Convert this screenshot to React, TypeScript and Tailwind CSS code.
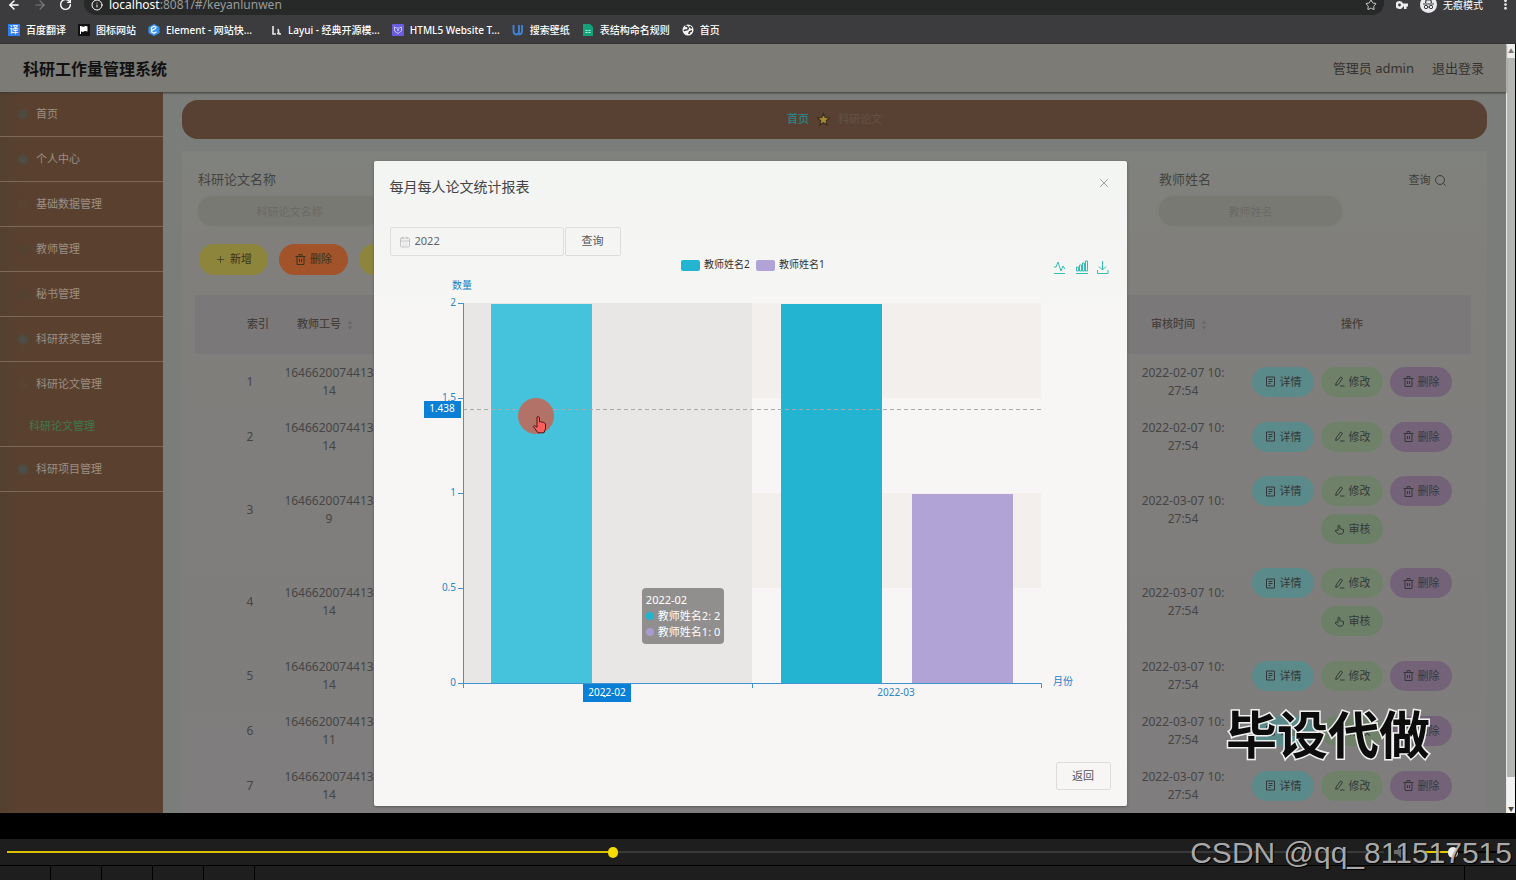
import { useState } from 'react';
import type { ReactNode } from 'react';
import { ArrowLeft, ArrowRight, RotateCw, Info, Star, EllipsisVertical, Plus, X, CalendarDays } from 'lucide-react';

interface Bookmark {
  label: string;
  icon: ReactNode;
}

const bookmarks: Bookmark[] = [
  {
    label: '百度翻译',
    icon: <span className="w-3 h-3 bg-[#2f7df0] text-white text-[9px] leading-3 text-center">译</span>,
  },
  {
    label: '图标网站',
    icon: (
      <svg className="w-3 h-3" viewBox="0 0 12 12">
        <rect width="12" height="12" rx="1" fill="#111" />
        <path d="M2.500 2v8" stroke="#fff" />
        <path d="M2 2.500c2-1 3 1 4.500 0s2 0 3 0v5c-1.500 0-2-1-3.500 0s-2 0-4 0z" fill="#fff" />
      </svg>
    ),
  },
  {
    label: 'Element - 网站快...',
    icon: (
      <svg className="w-3 h-3" viewBox="0 0 12 12">
        <path d="M6 0l5.500 3v6L6 12 .5 9V3z" fill="#3b94f5" />
        <path d="M8.500 3.500L6 2.300 3.500 3.800v4L6 9.300l2.500-1.500M4 6.500l4-2.200" stroke="#fff" strokeWidth="1.200" fill="none" />
      </svg>
    ),
  },
  {
    label: 'Layui - 经典开源模...',
    icon: (
      <svg className="w-3 h-3 ml-[6px]" viewBox="0 0 12 12">
        <path d="M3 2v8h3M8 5l1 5h2M7 9.500h1" stroke="#e8e8e8" strokeWidth="1.600" fill="none" />
      </svg>
    ),
  },
  {
    label: 'HTML5 Website T...',
    icon: (
      <svg className="w-3 h-3" viewBox="0 0 12 12">
        <rect width="12" height="12" rx="1" fill="#6a5de0" />
        <path d="M2.500 3l2 1h3l2-1v4L6 9.500 2.500 7z" fill="none" stroke="#c9c4ff" />
        <circle cx="6" cy="6" r="1" fill="#c9c4ff" />
      </svg>
    ),
  },
  {
    label: '搜索壁纸',
    icon: (
      <svg className="w-3 h-3" viewBox="0 0 12 12">
        <path d="M1.500 1v6c0 2 1 3.500 3 3.500S7 9 7 7V1M10 1v6c0 2-1 3.500-3 3.500" stroke="#3d86e0" strokeWidth="1.800" fill="none" />
      </svg>
    ),
  },
  {
    label: '表结构命名规则',
    icon: (
      <svg className="w-3 h-3" viewBox="0 0 12 12">
        <path d="M1 0h7l3 3v9H1z" fill="#12a37a" />
        <path d="M3.500 6.500h2m1 0h2m-5 2h2m1 0h2" stroke="#bff0de" />
      </svg>
    ),
  },
  {
    label: '首页',
    icon: (
      <svg className="w-3 h-3" viewBox="0 0 12 12">
        <circle cx="6" cy="6" r="5.500" fill="#f2f2f2" />
        <path d="M3 2c2 0 4 1 3 3S3 5 2 7m5 3c0-2 1-3 3-3M8 2c0 1 1 2 2 2" stroke="#3c3c3e" strokeWidth="1.600" fill="none" />
      </svg>
    ),
  },
];

interface MenuItem {
  label: string;
  dot: string;
  child?: string;
}

const menu: MenuItem[] = [
  { label: '首页', dot: 'bg-[#4f4b42]' },
  { label: '个人中心', dot: 'bg-[#4e4d46]' },
  { label: '基础数据管理', dot: 'bg-[#5a4331]' },
  { label: '教师管理', dot: 'bg-[#544232]' },
  { label: '秘书管理', dot: 'bg-[#544232]' },
  { label: '科研获奖管理', dot: 'bg-[#4e4d46]' },
  { label: '科研论文管理', dot: 'bg-[#5a4331]', child: '科研论文管理' },
  { label: '科研项目管理', dot: 'bg-[#49504a]' },
];

interface Row {
  id: number;
  code: [string, string];
  time: [string, string];
  review?: boolean;
}

const rows: Row[] = [
  { id: 1, code: ['1646620074413', '14'], time: ['2022-02-07 10:', '27:54'] },
  { id: 2, code: ['1646620074413', '14'], time: ['2022-02-07 10:', '27:54'] },
  { id: 3, code: ['1646620074413', '9'], time: ['2022-03-07 10:', '27:54'], review: true },
  { id: 4, code: ['1646620074413', '14'], time: ['2022-03-07 10:', '27:54'], review: true },
  { id: 5, code: ['1646620074413', '14'], time: ['2022-03-07 10:', '27:54'] },
  { id: 6, code: ['1646620074413', '11'], time: ['2022-03-07 10:', '27:54'] },
  { id: 7, code: ['1646620074413', '14'], time: ['2022-03-07 10:', '27:54'] },
];

function BrowserChrome() {
  return (
    <div className="shrink-0 h-11 bg-[#3c3c3e] text-white border-b border-[#33332f] overflow-hidden">
      <div className="flex h-[15px]">
        <div className="flex items-center gap-3 h-[9px] pl-[7px] pr-3 shrink-0">
          <button aria-label="Back"><ArrowLeft size={14} strokeWidth={2.5} /></button>
          <button aria-label="Forward" className="text-[#7d7d7f]"><ArrowRight size={14} /></button>
          <button aria-label="Reload"><RotateCw size={13} strokeWidth={2.5} /></button>
        </div>
        <div className="flex-1 bg-[#272928] rounded-b-xl px-[7px]">
          <div className="flex items-center gap-[6px] h-[9px]">
            <Info size={12} />
            <span className="text-[12px] leading-4">
              localhost<span className="text-[#9a9b9b]">:8081/#/keyanlunwen</span>
            </span>
            <button aria-label="Bookmark" className="ml-auto"><Star size={12} strokeWidth={1.5} /></button>
          </div>
        </div>
        <div className="flex items-center h-[9px] pl-3 pr-1 shrink-0">
          <svg className="w-3 h-2 mr-3" viewBox="0 0 12 8">
            <path d="M3.500 0a4 4 0 0 1 3.700 2.500H12v3h-1.500V8H8V5.500h-.8A4 4 0 1 1 3.500 0z" fill="#eee" />
            <circle cx="3.500" cy="4" r="1.400" fill="#3c3c3e" />
          </svg>
          <svg className="w-[17px] h-[17px]" viewBox="0 0 17 17">
            <circle cx="8.500" cy="8.500" r="8.500" fill="#e8eaed" />
            <path d="M5.500 7l.8-3.500 2.200.5 2.200-.5.8 3.500M3 8h11" fill="none" stroke="#3c3c3e" strokeWidth="1.200" />
            <circle cx="6" cy="11" r="1.700" fill="none" stroke="#3c3c3e" />
            <circle cx="11" cy="11" r="1.700" fill="none" stroke="#3c3c3e" />
            <path d="M7.700 11h1.600" stroke="#3c3c3e" />
          </svg>
          <span className="text-[10px] leading-4 ml-[6px] mr-4">无痕模式</span>
          <EllipsisVertical size={13} strokeWidth={3} />
        </div>
      </div>
      <div className="flex items-center gap-3 h-[30px] pl-2">
        {bookmarks.map(b => (
          <a key={b.label} href="#" className="flex items-center gap-[6px] text-[10px] font-medium whitespace-nowrap">
            {b.icon}
            {b.label}
          </a>
        ))}
      </div>
    </div>
  );
}

function Sidebar() {
  return (
    <nav className="w-[163px] shrink-0 text-[11px] text-[#9c8f83] bg-linear-to-r from-[#54402f] to-[#5a412f] to-15%">
      {menu.map(item => (
        <div key={item.label} className="border-b border-[#7e6853]">
          <a href="#" className="flex items-center gap-2 h-11 pl-[18px]">
            <span className={`w-[10px] h-[9px] rounded-full blur-[1px] ${item.dot}`} />
            {item.label}
          </a>
          {item.child && (
            <a href="#" className="flex items-center h-10 pl-[29px] text-[#3d7a4c]">{item.child}</a>
          )}
        </div>
      ))}
    </nav>
  );
}

function SearchField({ id, label }: { id: string; label: string }) {
  return (
    <div className="w-[183px]">
      <label htmlFor={id} className="block text-[13px] leading-5 text-[#44443f]">{label}</label>
      <input
        id={id}
        placeholder={label}
        className="block mt-[7px] w-full h-[30px] rounded-full bg-[#797973] text-center text-[11px] placeholder:text-[#696964] shadow-[0_0_2px_#787872]"
      />
    </div>
  );
}

function DetailIcon() {
  return (
    <svg className="w-[11px] h-[11px]" viewBox="0 0 11 11" fill="none" stroke="currentColor">
      <path d="M1.500 1h8v9h-8zM3.500 3.500h4M3.500 5.500h4M3.500 7.500h2" />
    </svg>
  );
}

function EditIcon() {
  return (
    <svg className="w-[11px] h-[11px]" viewBox="0 0 11 11" fill="none" stroke="currentColor">
      <path d="M6.500 1l2 1.300-4.300 6.200-2.500 1 .4-2.500zM6 10h4.500" />
    </svg>
  );
}

function TrashIcon() {
  return (
    <svg className="w-[11px] h-[11px]" viewBox="0 0 11 11" fill="none" stroke="currentColor">
      <path d="M.5 2.500h10M2 2.500v8h7v-8M4 2.500v-2h3v2M4.500 5v3M6.500 5v3" />
    </svg>
  );
}

function ThumbIcon() {
  return (
    <svg className="w-[11px] h-[11px]" viewBox="0 0 11 11" fill="none" stroke="currentColor">
      <path d="M4 6.500V1.700a1 1 0 0 1 1.800 0v3l3.700.8v2.800L8 10H4.500L1 6.800l1-.8z" />
    </svg>
  );
}

function RowButton({ color, icon, children }: { color: string; icon: ReactNode; children: ReactNode }) {
  return (
    <button className={`flex items-center justify-center gap-1 w-[62px] h-[30px] rounded-full text-[11px] text-[#34383a] ${color}`}>
      {icon}
      {children}
    </button>
  );
}

function SortMark() {
  return (
    <svg className="w-[6px] h-[10px] ml-[6px] inline-block" viewBox="0 0 6 10">
      <path d="M3 0l2.500 4h-5zM3 10l2.500-4h-5z" fill="#6c6a6a" />
    </svg>
  );
}

function PaperTable() {
  return (
    <table className="w-full table-fixed border-collapse text-center text-[#454545]">
      <colgroup>
        <col className="w-[30px]" />
        <col className="w-[50px]" />
        <col className="w-[108px]" />
        <col />
        <col className="w-[100px]" />
        <col className="w-[238px]" />
      </colgroup>
      <thead>
        <tr className="h-[59px] bg-[#7b7879] text-[11px] text-[#45403a]">
          <th />
          <th className="font-medium pl-4">索引</th>
          <th className="font-medium pr-2">教师工号<SortMark /></th>
          <th />
          <th className="font-medium pr-2">审核时间<SortMark /></th>
          <th className="font-medium">操作</th>
        </tr>
      </thead>
      <tbody className="text-[12px] leading-[18px]">
        {rows.map(row => (
          <tr key={row.id} className={row.review ? 'h-[92px]' : 'h-[55px]'}>
            <td />
            <td>{row.id}</td>
            <td>{row.code[0]}<br />{row.code[1]}</td>
            <td />
            <td>{row.time[0]}<br />{row.time[1]}</td>
            <td>
              <div className="flex flex-wrap justify-center gap-x-[7px] gap-y-2">
                <RowButton color="bg-[#5b8a8a]" icon={<DetailIcon />}>详情</RowButton>
                <RowButton color="bg-[#6f8269]" icon={<EditIcon />}>修改</RowButton>
                <RowButton color="bg-[#746378]" icon={<TrashIcon />}>删除</RowButton>
                {row.review && (
                  <RowButton color="bg-[#6b8066]" icon={<ThumbIcon />}>审核</RowButton>
                )}
              </div>
            </td>
          </tr>
        ))}
      </tbody>
    </table>
  );
}

function Content() {
  return (
    <main className="flex-1 min-w-0 px-[19px] pt-2 bg-[#7a7d79]">
      <div className="flex items-center justify-center gap-2 h-[39px] pt-px rounded-2xl bg-[#584132] border-b border-[#57422b] text-[11px]">
        <a href="#" className="font-medium text-[#2b8388]">首页</a>
        <svg className="w-[13px] h-[13px]" viewBox="0 0 24 24">
          <path d="M12 1.500l3.200 7 7.600.8-5.700 5.100 1.600 7.500L12 18l-6.700 3.900 1.600-7.500L1.200 9.300l7.600-.8z" fill="#a48a36" stroke="#3a2c17" strokeWidth="2" />
        </svg>
        <span className="text-[#665246]">科研论文</span>
      </div>
      <div className="mt-3 pt-[18px] pl-[13px] pr-4 bg-linear-to-b from-[#80827e] via-[#807f7c] via-15% to-[#7f7d7d]">
        <div className="flex items-start pl-[3px]">
          <SearchField id="paper" label="科研论文名称" />
          <div className="ml-auto">
            <SearchField id="teacher" label="教师姓名" />
          </div>
          <button className="flex items-center justify-center gap-1 ml-[50px] mr-[9px] w-[70px] h-[22px] text-[11px] text-[#3d3d39]">
            查询
            <svg className="w-[11px] h-[11px]" viewBox="0 0 11 11" fill="none" stroke="currentColor">
              <circle cx="5" cy="5" r="4.500" />
              <path d="M8.500 8.500l2 2" />
            </svg>
          </button>
        </div>
        <div className="flex gap-[11px] mt-[18px] pl-1 text-[11px] text-[#37331c]">
          <button className="flex items-center justify-center gap-1 w-[69px] h-[31px] rounded-full bg-[#8d853b]">
            <Plus size={11} strokeWidth={1.5} />新增
          </button>
          <button className="flex items-center justify-center gap-1 w-[69px] h-[31px] rounded-full bg-[#a2532a]">
            <TrashIcon />删除
          </button>
          <button className="px-4 h-[31px] rounded-full bg-[#8d853b]">每月每人论文统计报表</button>
        </div>
        <div className="mt-5">
          <PaperTable />
        </div>
      </div>
    </main>
  );
}

const plot = { left: 73, right: 651, top: 47, bottom: 427 };
const yTicks = [0, 0.5, 1, 1.5, 2];
const toY = (v: number) => plot.bottom - (v / 2) * (plot.bottom - plot.top);

const bars = [
  { x: 101, value: 2, color: '#46c3dc' },
  { x: 391, value: 2, color: '#22b4d1' },
  { x: 522, value: 1, color: '#b2a3d6' },
];

function PaperChart() {
  return (
    <div className="relative">
      <svg className="block w-full" viewBox="0 0 721 490" fontSize="10" fill="none">
        <rect x="291" y="4" width="19" height="11" rx="2" fill="#22b4d1" />
        <text x="314" y="12" fill="#333">教师姓名2</text>
        <rect x="366" y="4" width="19" height="11" rx="2" fill="#b2a3d6" />
        <text x="389" y="12" fill="#333">教师姓名1</text>

        {/* toolbox */}
        <g stroke="#35bdb5">
          <path d="M664 11h2l2-5 3 9 2-5 2 3M664 17.500h11" />
          <path d="M686.500 15v-4h2v4zM689.500 15v-6h2v6zM692.500 15V7h2v8zM695.500 15V5h2v10zM686 17.500h12" />
          <path d="M712.500 5v9M709 10.500l3.500 3.500 3.500-3.500M707.500 14v3.500h10.500v-3.500" />
        </g>

        <rect x={plot.left} y={toY(2)} width="578" height="95" fill="#f2efed" />
        <rect x={plot.left} y={toY(1)} width="578" height="95" fill="#f2efed" />
        <rect x={plot.left} y={plot.top} width="289" height="380" fill="#e9e7e6" />

        {bars.map(b => (
          <rect key={b.x} x={b.x} y={toY(b.value) + 1} width="101" height={plot.bottom - toY(b.value) - 1} fill={b.color} />
        ))}

        <path d="M73 153.500H651" stroke="#aaa" strokeDasharray="4 3" />
        <path d="M73.500 47V432M68 427.500H651.500V432M362.500 427V432" stroke="#3f93cf" />
        {yTicks.map(t => (
          <g key={t}>
            <path d={`M68 ${toY(t) + 0.5}H73`} stroke="#3f93cf" />
            <text x="66" y={toY(t) + 3} textAnchor="end" fill="#2b86c8">{t}</text>
          </g>
        ))}
        <text x="72" y="33" textAnchor="middle" fill="#1482c8">数量</text>
        <text x="663" y="429" fill="#1482c8">月份</text>
        <text x="506" y="440" textAnchor="middle" fill="#2b86c8">2022-03</text>

        <rect x="34" y="145" width="37" height="17" fill="#0a7fd6" />
        <text x="52" y="156" textAnchor="middle" fill="#fff">1.438</text>
        <rect x="193" y="428" width="48" height="18" fill="#0a7fd6" />
        <text x="217" y="440" textAnchor="middle" fill="#fff">2022-02</text>
        <path d="M212 439l3 2 2-2" stroke="#fff" />

        {/* click highlight and pointer */}
        <circle cx="146" cy="160" r="18" fill="#b27268" />
        <path
          d="M147 161c1-1 2.500 0 2.500 1v4l1-.5 1.500.8 1.500-.2 1 1.200 1 .5v5l-1.500 4h-6l-4.500-6c0-1.500 1.500-1.500 3.500.5z"
          fill="#fa5f5c"
          stroke="#4a1a1a"
        />
      </svg>
      <div className="absolute left-[35%] top-[332px] rounded bg-[#918f8e] px-1 py-1 text-[11px] leading-[16px] text-white whitespace-nowrap">
        <p>2022-02</p>
        <p className="flex items-center gap-1"><span className="w-2 h-2 rounded-full bg-[#22b4d1]" />教师姓名2: 2</p>
        <p className="flex items-center gap-1"><span className="w-2 h-2 rounded-full bg-[#a99bcf]" />教师姓名1: 0</p>
      </div>
    </div>
  );
}

function ReportDialog() {
  const [year, setYear] = useState('2022');

  return (
    <div role="dialog" aria-labelledby="report-title" className="w-1/2 mr-[6px] px-4 pb-4 rounded-xs bg-linear-to-b from-[#f3f5f3] via-[#f7f6f5] via-30% to-[#f8f5f5] shadow-[0_1px_3px_rgba(0,0,0,0.3)]">
      <div className="flex items-center justify-between h-[50px]">
        <h2 id="report-title" className="text-[14px] text-[#444]">每月每人论文统计报表</h2>
        <button aria-label="Close" className="text-[#909399] mb-[6px]"><X size={14} strokeWidth={1.5} /></button>
      </div>
      <form className="flex gap-px pt-4" onSubmit={e => e.preventDefault()}>
        <label className="flex items-center gap-1 w-[174px] h-[29px] px-2 border border-[#dfe0de] rounded-xs">
          <CalendarDays size={12} strokeWidth={1.5} className="text-[#b4b6b8] shrink-0" />
          <input
            aria-label="年份"
            value={year}
            onChange={e => setYear(e.target.value)}
            className="min-w-0 flex-1 text-[11px] text-[#606266] outline-none"
          />
        </label>
        <button className="w-14 h-[29px] border border-[#dcdddc] rounded-xs text-[11px] text-[#555]">查询</button>
      </form>
      <PaperChart />
      <div className="flex justify-end pt-4">
        <button className="w-[55px] h-7 border border-[#dcdcdc] rounded-xs text-[11px] text-[#555]">返回</button>
      </div>
    </div>
  );
}

function Player() {
  const [progress, setProgress] = useState(44);
  const [volume, setVolume] = useState(42);
  const track = (value: number, on: string, off: string) => ({
    background: `linear-gradient(to right, ${on} ${value}%, ${off} ${value}%)`,
  });

  return (
    <div className="shrink-0 bg-[#1e1e1e]">
      <div className="flex items-center h-[26px] pl-[7px] pr-[10px]">
        <input
          type="range"
          aria-label="Progress"
          value={progress}
          onChange={e => setProgress(Number(e.target.value))}
          style={track(progress, '#d8c200', '#3a3a3a')}
          className="flex-1 h-[2px] appearance-none [&::-webkit-slider-thumb]:appearance-none [&::-webkit-slider-thumb]:w-[10px] [&::-webkit-slider-thumb]:h-[11px] [&::-webkit-slider-thumb]:rounded-full [&::-webkit-slider-thumb]:bg-[#f5dc00]"
        />
        <button aria-label="Mute" className="ml-[10px] mr-2">
          <svg className="w-3 h-3" viewBox="0 0 12 12">
            <path d="M0 4h3l4-4v12L3 8H0z" fill="#6b6b6b" />
            <path d="M9 3v6M11 4v4" stroke="#4a4a4a" />
          </svg>
        </button>
        <input
          type="range"
          aria-label="Volume"
          value={volume}
          onChange={e => setVolume(Number(e.target.value))}
          style={track(volume, '#e0ca00', '#060606')}
          className="w-[92px] h-[2px] appearance-none [&::-webkit-slider-thumb]:appearance-none [&::-webkit-slider-thumb]:w-[10px] [&::-webkit-slider-thumb]:h-[11px] [&::-webkit-slider-thumb]:rounded-full [&::-webkit-slider-thumb]:bg-[#eee]"
        />
      </div>
      <div className="flex h-[15px] border-t border-black">
        {[1, 2, 3, 4, 5].map(n => (
          <div key={n} className="w-[51px] border-r border-black" />
        ))}
        <div className="ml-auto w-[52px] border-l border-black" />
      </div>
    </div>
  );
}

export default function App() {
  return (
    <div className="relative flex flex-col h-screen overflow-hidden bg-black font-['Noto_Sans','Noto_Sans_CJK_SC',sans-serif]">
      <BrowserChrome />
      <div className="relative flex flex-1 min-h-0 overflow-hidden">
        <div className="flex flex-col flex-1 min-w-0">
          <header className="relative flex items-center shrink-0 h-12 pt-px pl-[23px] pr-[22px] bg-[#7c7b76] shadow-[0_1px_2px_#3c3a36] text-[13px] text-[#34332f]">
            <h1 className="text-[16px] font-bold text-[#111]">科研工作量管理系统</h1>
            <span className="ml-auto mr-[18px]">管理员 admin</span>
            <a href="#">退出登录</a>
          </header>
          <div className="flex flex-1 min-h-0">
            <Sidebar />
            <Content />
          </div>
        </div>
        <div className="flex flex-col items-center w-[10px] shrink-0 border-x border-r-black border-l-[#e8e8e8] bg-[#b2b5b1]">
          <div className="w-full h-[14px] bg-[#eceeec] text-[6px] leading-[14px] text-center text-[#777]">▲</div>
          <div className="mt-auto flex items-end justify-center w-full h-[36px] bg-[#f1f2f1] text-[6px] leading-[8px] text-[#444]">▼</div>
        </div>
        <div className="absolute inset-0 right-[10px] flex items-start justify-center pt-[117px]">
          <ReportDialog />
        </div>
        <p className="absolute right-[86px] bottom-[48px] text-[51px] leading-[62px] font-bold text-[#0c0c0c] [-webkit-text-stroke:3px_#f0f0f0] [paint-order:stroke_fill]">
          毕设代做
        </p>
      </div>
      <div className="shrink-0 h-[26px] bg-black" />
      <Player />
      <p className="absolute right-1 bottom-[7px] font-['Liberation_Sans',sans-serif] text-[30px] leading-10 text-[#bfbfbf]/90 [text-shadow:1px_1px_1px_#000] pointer-events-none">
        CSDN @qq_811517515
      </p>
    </div>
  );
}
